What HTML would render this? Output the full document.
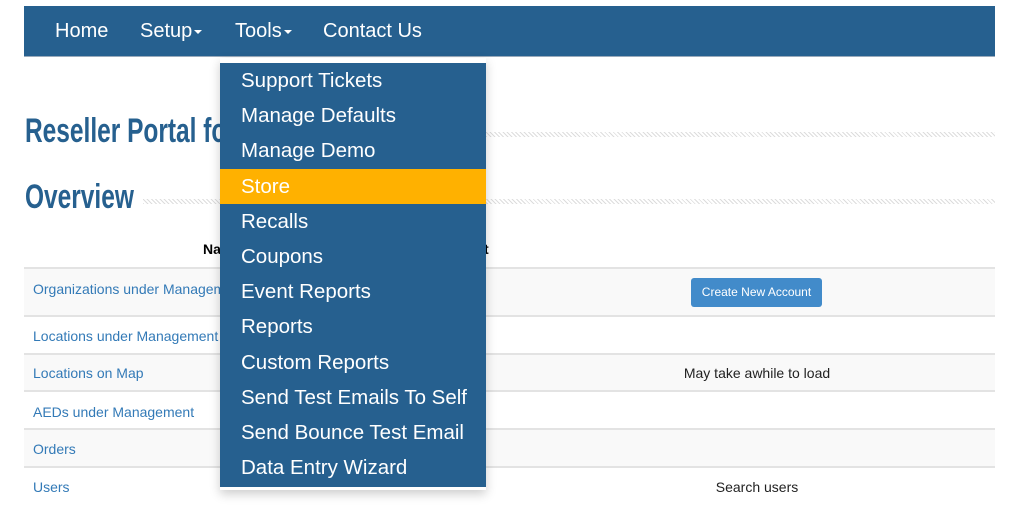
<!DOCTYPE html>
<html><head><style>
body{margin:0;width:1024px;height:499px;overflow:hidden;background:#fff;font-family:"Liberation Sans",sans-serif;position:relative}
.nav{position:absolute;left:24px;top:6px;width:971px;height:50px;background:#26608f;border-bottom:1px solid #9ab}
.nav span{position:absolute;top:14px;color:#fff;font-size:20px}
.caret{display:inline-block;width:0;height:0;border-left:4px solid transparent;border-right:4px solid transparent;border-top:4px solid #fff;vertical-align:middle;margin-left:2px}
h1{position:absolute;margin:0;font-family:"Liberation Sans Narrow","Liberation Sans",sans-serif;font-weight:bold;color:#26608f;transform:scaleX(.72);transform-origin:left;white-space:nowrap}
.stripe{position:absolute;height:5px;background:repeating-linear-gradient(45deg,#ddd 0 1px,#fff 1px 3px)}
.row{position:absolute;left:24px;width:971px;border-top:2px solid #e3e3e3;font-size:14px}
.row a{position:absolute;left:9px;color:#337ab7;text-decoration:none}
.row .r{position:absolute;left:600px;width:266px;text-align:center;color:#222}
.g{background:#f9f9f9}
.dd{position:absolute;left:220px;top:58px;width:266px;height:432px;background:#fff;box-shadow:0 4px 10px rgba(0,0,0,.2)}
.dd .in{position:absolute;top:5px;left:0;width:266px;height:424px;background:#26608f}
.dd div.i{height:35.2px;line-height:35px;padding-left:21px;color:#fff;font-size:20.5px;white-space:nowrap}
.dd .hl{background:#ffb100}
</style></head><body>
<div class="nav">
<span style="left:31px">Home</span>
<span style="left:116px">Setup<i class="caret"></i></span>
<span style="left:211px">Tools<i class="caret"></i></span>
<span style="left:299px">Contact Us</span>
</div>
<h1 style="left:25px;top:112px;font-size:34px">Reseller Portal for</h1>
<div class="stripe" style="left:486px;top:132px;width:509px"></div>
<h1 style="left:25px;top:178px;font-size:34px">Overview</h1>
<div class="stripe" style="left:143px;top:199px;width:852px"></div>
<div style="position:absolute;left:203px;top:241px;font-weight:bold;font-size:14px">Na</div>
<div style="position:absolute;left:484px;top:241px;font-weight:bold;font-size:14px">t</div>
<div class="row g" style="top:267px;height:47px"><a style="top:12px">Organizations under Management</a>
<div style="position:absolute;left:667px;top:9px;width:131px;height:29px;background:#428bca;border-radius:3px;color:#fff;font-size:12px;line-height:29px;text-align:center">Create New Account</div></div>
<div class="row" style="top:315px;height:37px"><a style="top:11px">Locations under Management</a></div>
<div class="row g" style="top:353px;height:36px"><a style="top:10px">Locations on Map</a><div class="r" style="top:10px">May take awhile to load</div></div>
<div class="row" style="top:390px;height:37px"><a style="top:12px">AEDs under Management</a></div>
<div class="row g" style="top:428px;height:37px"><a style="top:11px">Orders</a></div>
<div class="row" style="top:466px;height:40px"><a style="top:11px">Users</a><div class="r" style="top:11px">Search users</div></div>
<div class="dd"><div class="in">
<div class="i">Support Tickets</div><div class="i">Manage Defaults</div><div class="i">Manage Demo</div>
<div class="i hl">Store</div><div class="i">Recalls</div><div class="i">Coupons</div><div class="i">Event Reports</div>
<div class="i">Reports</div><div class="i">Custom Reports</div><div class="i">Send Test Emails To Self</div>
<div class="i">Send Bounce Test Email</div><div class="i">Data Entry Wizard</div>
</div></div>
</body></html>
